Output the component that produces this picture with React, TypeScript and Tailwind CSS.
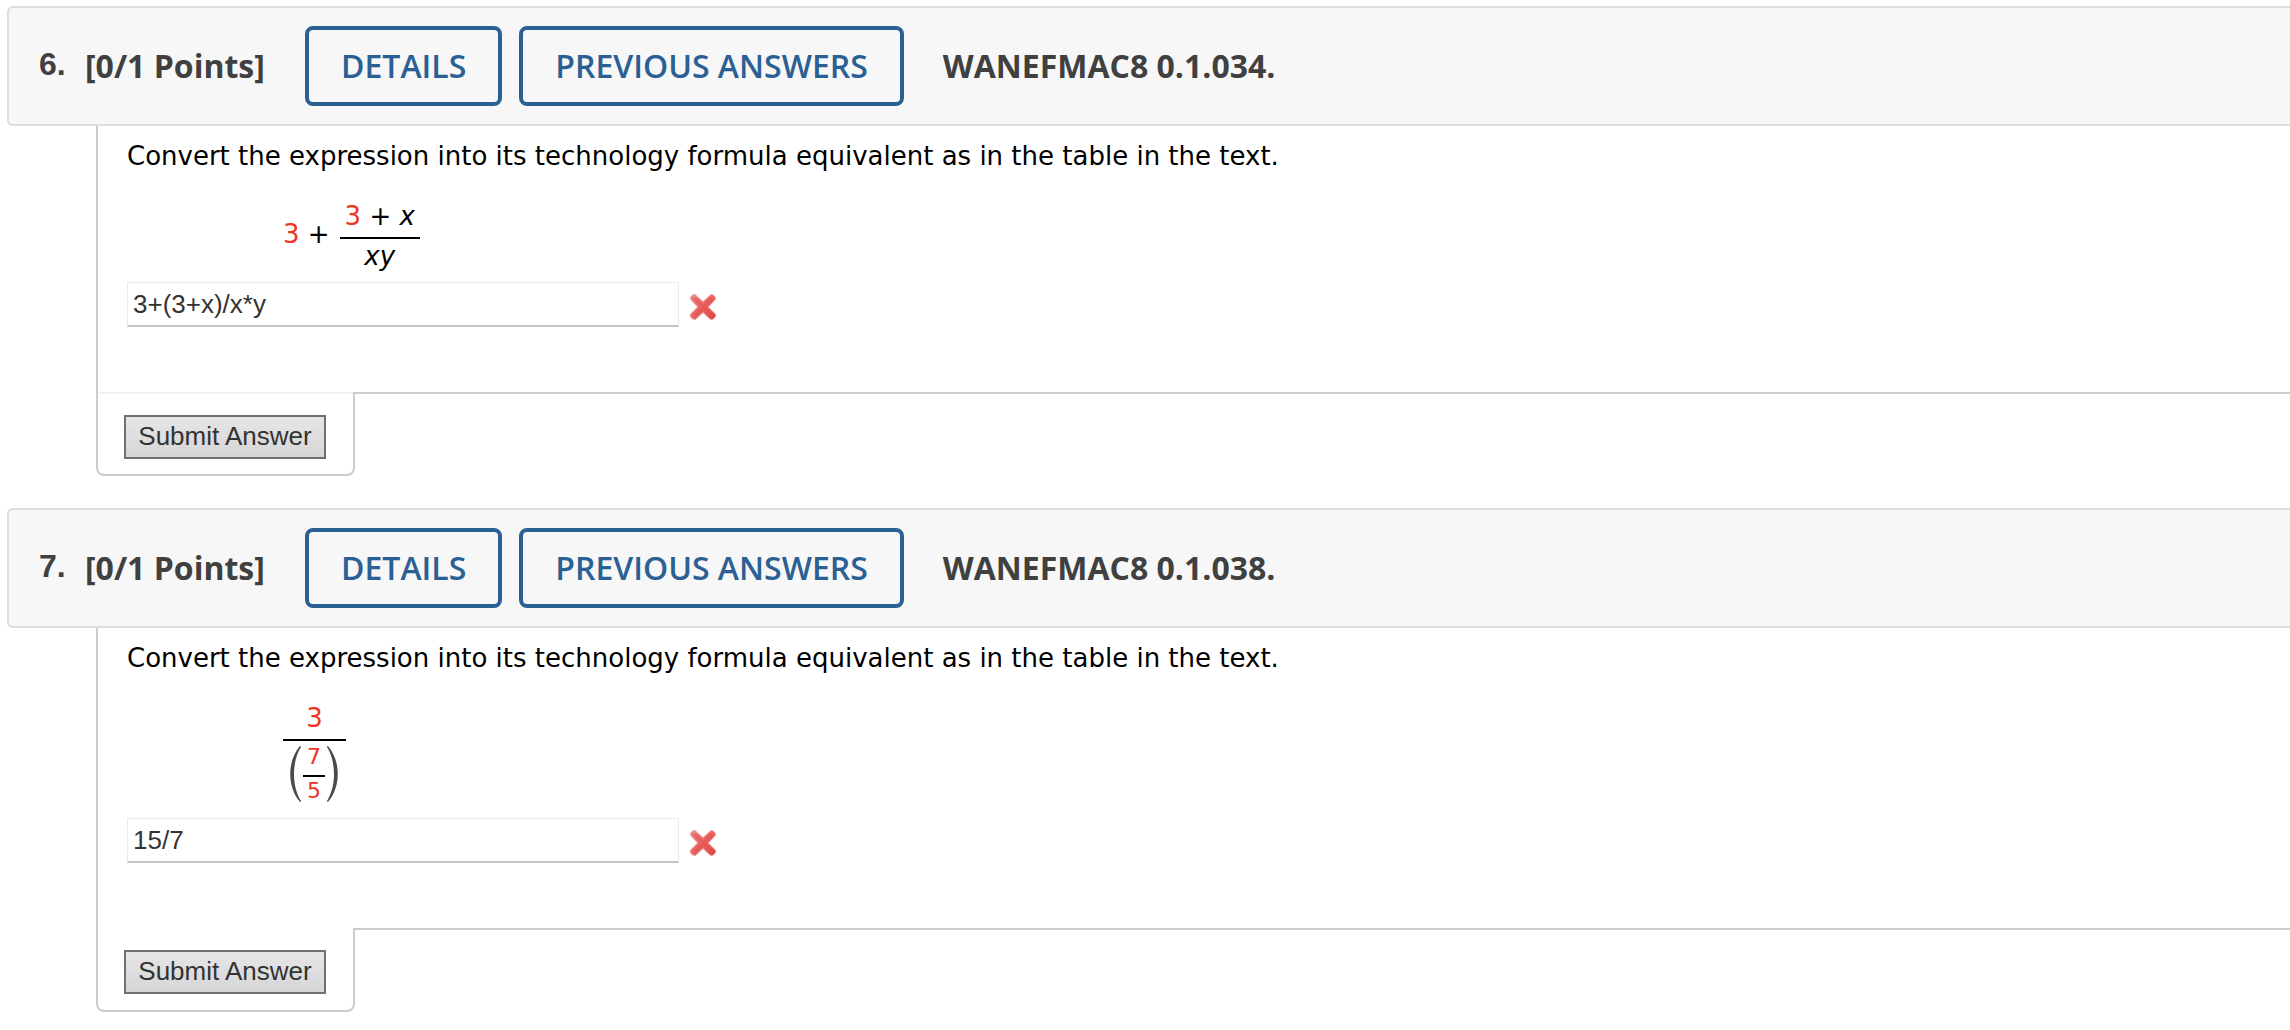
import React, { ReactNode, useState } from "react";

type QuestionProps = {
  number: number;
  code: string;
  initialAnswer: string;
  divided?: boolean;
  children: ReactNode;
};

const Red = ({ children }: { children: ReactNode }) => (
  <span className="text-[#ee3524]">{children}</span>
);

function WrongMark() {
  return (
    <svg viewBox="0 0 28 28" className="mt-1 size-7 shrink-0" role="img" aria-label="Incorrect">
      <defs>
        <linearGradient id="wrong-fill" x1="0" y1="0" x2="1" y2="1">
          <stop offset="0" stopColor="#f08a88" />
          <stop offset="0.5" stopColor="#e96461" />
          <stop offset="1" stopColor="#dd4440" />
        </linearGradient>
      </defs>
      <path
        d="M6 1.4 14 8.6 22 1.4Q24 .6 26.2 4Q27.4 5.6 26 7L19.4 14 26.4 21Q27.6 22.6 26 24.6Q23.6 27.4 21.4 26.4L14 19.6 6.6 26.4Q4.6 27.4 2 24.6Q.4 22.6 1.6 21L8.6 14 2 7Q.6 5.4 2 3.6Q4 .6 6 1.4Z"
        fill="url(#wrong-fill)"
        stroke="#f2aaa8"
        strokeWidth="1"
        strokeLinejoin="round"
      />
      <path d="M6 6 22 22M22 6 6 22" stroke="#e45451" strokeWidth="3" strokeLinecap="round" opacity="0.5" />
    </svg>
  );
}

function Paren({ flip = false }: { flip?: boolean }) {
  return (
    <svg viewBox="0 0 13 58" className={flip ? "h-[58px] w-[13px] -scale-x-100" : "h-[58px] w-[13px]"} aria-hidden="true">
      <path d="M11 1C-2 16 -2 42 11 57L12.2 56.2C2.6 42 2.6 16 12.2 1.8Z" fill="#4a4a4a" />
    </svg>
  );
}

function HeaderButton({ children }: { children: ReactNode }) {
  return (
    <button
      type="button"
      className="h-20 rounded-lg border-4 border-[#2a6094] px-8 text-[32px] leading-10 font-semibold whitespace-nowrap text-[#2a6094]"
    >
      {children}
    </button>
  );
}

function Question({ number, code, initialAnswer, divided = false, children }: QuestionProps) {
  const [answer, setAnswer] = useState(initialAnswer);
  return (
    <section>
      <header className="ml-[7px] flex h-[120px] items-center rounded-l-md border-2 border-r-0 border-[#dedede] bg-[#f7f7f7] pl-[30px] font-['Open_Sans',sans-serif] text-[32px] leading-10 font-bold whitespace-nowrap text-[#404040]">
        <span className="w-[46px] pb-1 font-['Liberation_Sans',sans-serif]">{number}.</span>
        <h2 className="w-[220px]">[0/1 Points]</h2>
        <div className="flex gap-[17px]">
          <HeaderButton>DETAILS</HeaderButton>
          <HeaderButton>PREVIOUS ANSWERS</HeaderButton>
        </div>
        <span className="pl-[39px]">{code}</span>
      </header>
      <div className="ml-24">
        <div className="border-l-2 border-[#cccccc] pt-3.5 pb-[65px] pl-[29px] font-['DejaVu_Sans',sans-serif] text-[26px] leading-8 text-black">
          <p>Convert the expression into its technology formula equivalent as in the table in the text.</p>
          <div className="flex pt-7 pl-[156px]">{children}</div>
          <div className="mt-2.5 flex items-center gap-2.5">
            <input
              type="text"
              aria-label={`Answer to question ${number}`}
              value={answer}
              onChange={(e) => setAnswer(e.target.value)}
              className="h-[45px] w-[552px] border border-b-2 border-[#ebebeb] border-b-[#c4c4c4] bg-white pl-[5px] font-['Liberation_Sans',sans-serif] text-[26px] text-[#333333] outline-none"
            />
            <WrongMark />
          </div>
        </div>
        <div className="flex">
          <div className="rounded-b-lg border-2 border-t-0 border-[#cccccc]">
            <div
              className={
                divided
                  ? "border-t-2 border-[#f2f2f2] pt-[21px] pr-[27px] pb-[15px] pl-[26px]"
                  : "pt-[22px] pr-[27px] pb-4 pl-[26px]"
              }
            >
              <button
                type="button"
                className="block h-11 w-[202px] border-2 border-[#707070] bg-linear-to-b from-[#e6e6e6] to-[#d6d6d6] pb-0.5 font-['Liberation_Sans',sans-serif] text-[26px] leading-8 whitespace-nowrap text-[#333333]"
              >
                Submit Answer
              </button>
            </div>
          </div>
          <div className="-ml-0.5 flex-1 self-start border-t-2 border-[#cccccc]" />
        </div>
      </div>
    </section>
  );
}

export default function App() {
  return (
    <main className="flex flex-col gap-8 overflow-x-hidden bg-white pt-1.5 pb-4">
      <Question number={6} code="WANEFMAC8 0.1.034." initialAnswer="3+(3+x)/x*y" divided>
        <div className="pt-[18px] pr-2.5">
          <Red>3</Red> +
        </div>
        <div className="text-center">
          <div className="border-b-2 border-black px-[5px] pb-[5px]">
            <Red>3</Red> + <i>x</i>
          </div>
          <div className="pt-px">
            <i>xy</i>
          </div>
        </div>
      </Question>
      <Question number={7} code="WANEFMAC8 0.1.038." initialAnswer="15/7">
        <div className="text-center">
          <div className="border-b-2 border-black pb-[5px]">
            <Red>3</Red>
          </div>
          <div className="flex items-center pt-[3px] pr-[7px] pb-1 pl-1.5">
            <Paren />
            <div className="mx-px text-[22px] leading-[26px]">
              <div className="border-b-2 border-black px-1 pb-[5px]">
                <Red>7</Red>
              </div>
              <div className="pt-px">
                <Red>5</Red>
              </div>
            </div>
            <Paren flip />
          </div>
        </div>
      </Question>
    </main>
  );
}
